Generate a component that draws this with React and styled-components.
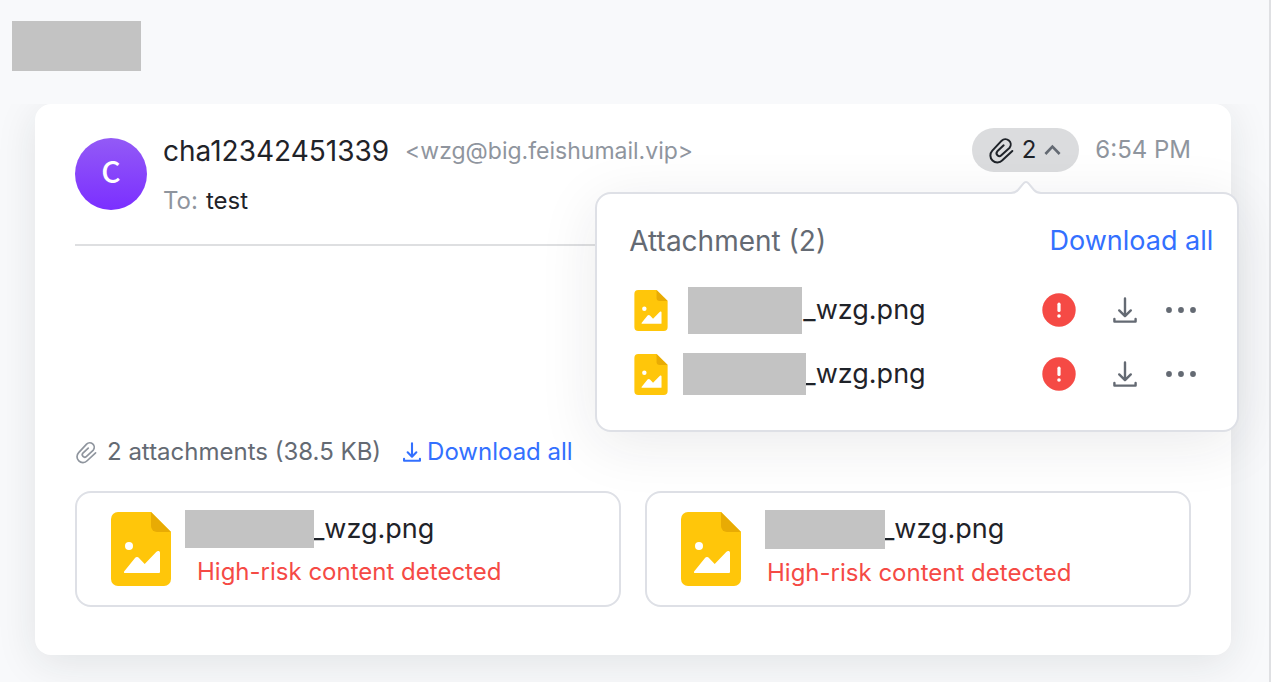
import React, { useState } from 'react'
import styled, { createGlobalStyle } from 'styled-components'

const Global = createGlobalStyle`
  *, *::before, *::after {
    box-sizing: border-box;
  }
  body {
    margin: 0;
    background: #f8f9fb;
    color: #1f2329;
    font-family: Inter, "Liberation Sans", sans-serif;
    font-size: 24px;
    line-height: 32px;
  }
  button {
    padding: 0;
    border: none;
    background: transparent;
    color: inherit;
    font: inherit;
    cursor: pointer;
  }
  svg {
    display: block;
    flex: none;
  }
`

const Page = styled.div`
  min-height: 100vh;
  display: flex;
  flex-direction: column;
  border-right: 2px solid #dfe0e3;
`

const TopBar = styled.header`
  padding: 21px 12px 33px;
`

const Mask = styled.span`
  position: relative;
  z-index: 1;
  display: block;
  flex: none;
  width: ${({ $width }) => $width}px;
  height: ${({ $height }) => $height}px;
  margin-left: ${({ $before }) => $before || 0}px;
  margin-right: ${({ $after }) => $after || 0}px;
  background: #c3c3c3;
`

const Thread = styled.main`
  flex: 1;
  padding: 0 38px 27px 35px;
  overflow: hidden;
`

const Mail = styled.article`
  padding: 0 40px 48px;
  border-radius: 16px;
  background: #fff;
  box-shadow: 0 8px 40px rgba(31, 35, 41, 0.1);
`

const MailHeader = styled.div`
  display: flex;
  align-items: flex-start;
  padding: 24px 0 27px;
  border-bottom: 2px solid #dedfe1;
`

const Avatar = styled.div`
  display: flex;
  align-items: center;
  justify-content: center;
  width: 72px;
  height: 72px;
  margin: 10px 16px 0 0;
  padding-bottom: 8px;
  border-radius: 50%;
  background: linear-gradient(#935af6, #7b2fff);
  color: #fff;
  font-family: "Noto Sans CJK SC", sans-serif;
  font-size: 30px;
  font-weight: 500;
`

const Sender = styled.div`
  flex: 1;
  display: flex;
  flex-direction: column;
  gap: 12px;
  padding-top: 1px;
`

const Line = styled.div`
  display: flex;
  align-items: center;
  gap: ${({ $gap }) => $gap}px;
  min-height: ${({ $height }) => $height}px;
`

const Name = styled.span`
  font-size: 28px;
`

const Muted = styled.span`
  color: #8f959e;
`

const Address = styled(Muted)`
  font-size: 23px;
`

const HeaderSide = styled.div`
  display: flex;
  align-items: center;
  gap: 16px;
  color: #8f959e;
`

const PopoverAnchor = styled.div`
  position: relative;
`

const Pill = styled.button`
  display: flex;
  align-items: center;
  gap: 8px;
  height: 44px;
  padding: 0 17px 0 16px;
  border-radius: 22px;
  background: #dbdcde;
  color: #1f2329;
`

const Popover = styled.section`
  position: absolute;
  top: 64px;
  right: -160px;
  z-index: 5;
  width: 644px;
  padding: 22px 24px 24px 32px;
  border: 2px solid #dee0e6;
  border-radius: 16px;
  background: #fff;
  box-shadow: 0 12px 60px rgba(31, 35, 41, 0.09);
`

const Arrow = styled.svg`
  position: absolute;
  top: 52px;
  left: 50%;
  z-index: 6;
  transform: translateX(-50%);
`

const PopoverHead = styled.div`
  display: flex;
  align-items: center;
  justify-content: space-between;
  height: 50px;
  margin-bottom: 12px;
  color: #646a73;
  font-size: 27px;
`

const PopoverTitle = styled.span`
  font-size: 28px;
`

const LinkButton = styled.button`
  display: inline-flex;
  align-items: center;
  gap: 6px;
  color: #3370ff;
`

const FileList = styled.ul`
  margin: 0;
  padding: 0;
  list-style: none;
`

const FileRow = styled.li`
  display: flex;
  align-items: center;
  height: 64px;
  padding: 0 14px 0 5px;
`

const FileName = styled.div`
  flex: 1;
  display: flex;
  align-items: center;
  color: #1f2329;
  font-size: 27px;
`

const Actions = styled.div`
  display: flex;
  align-items: center;
  gap: 20px;
  color: #646a73;
`

const Warning = styled.span`
  margin-right: 11px;
`

const IconButton = styled.button`
  display: flex;
  align-items: center;
  justify-content: center;
  width: 36px;
  height: 36px;
`

const MailBody = styled.div`
  height: 190px;
`

const Summary = styled.div`
  display: flex;
  align-items: center;
  gap: 10px;
  margin-bottom: 23px;
  color: #646a73;

  ${LinkButton} {
    margin-left: 12px;
  }
`

const Cards = styled.div`
  display: grid;
  grid-template-columns: 1fr 1fr;
  gap: 24px;
`

const Card = styled.div`
  display: flex;
  align-items: center;
  gap: 26px;
  height: 116px;
  padding: 0 34px;
  border: 2px solid #dee0e6;
  border-radius: 16px;
`

const CardText = styled.div`
  display: flex;
  flex-direction: column;
  gap: 8px;

  ${FileName} {
    height: 38px;
  }
`

const Risk = styled.span`
  color: #f54a45;
`

const ClipIcon = ({ width, height, color }) => (
  <svg width={width} height={height} viewBox="0 0 78 84" fill="none" stroke={color} strokeWidth="6" strokeLinecap="round" strokeLinejoin="round">
    <path d="M73 45L43 73a20.500 20.500 0 0 1-30-29L41 14a16 16 0 0 1 24 21L40 58a8.500 8.500 0 0 1-12-12l19-18" />
  </svg>
)

const DownloadIcon = ({ width, height, weight = 2.4 }) => (
  <svg width={width} height={height} viewBox="0 0 24 26" fill="none" stroke="currentColor" strokeWidth={weight} strokeLinecap="round" strokeLinejoin="round">
    <path d="M12 1.400V19M6.200 13.400L12 19.200l5.800-5.800" />
    <path d="M1.400 22v2.600h21.200V22" />
  </svg>
)

const MoreIcon = () => (
  <svg width="30" height="6" viewBox="0 0 30 6" fill="currentColor">
    <circle cx="3" cy="3" r="2.9" />
    <circle cx="15" cy="3" r="2.9" />
    <circle cx="27" cy="3" r="2.9" />
  </svg>
)

const WarningIcon = () => (
  <svg width="34" height="34" viewBox="0 0 34 34" role="img" aria-label="Risk">
    <circle cx="17" cy="17" r="16.7" fill="#f54a45" />
    <path d="M17 11.200v6.200" stroke="#fff" strokeWidth="3.2" strokeLinecap="round" />
    <circle cx="17" cy="23" r="1.8" fill="#fff" />
  </svg>
)

const ChevronIcon = () => (
  <svg width="18" height="12" viewBox="0 0 18 12" fill="none" stroke="#646a73" strokeWidth="2.6">
    <path d="M1.400 10L8.400 2.600l7.200 7.400" />
  </svg>
)

const ImageFileIcon = ({ width, height }) => (
  <svg width={width} height={height} viewBox="0 0 60 74">
    <path d="M7 0h33l20 20v47a7 7 0 0 1-7 7H7a7 7 0 0 1-7-7V7a7 7 0 0 1 7-7z" fill="#ffc60a" />
    <path d="M40 0l20 20H46a6 6 0 0 1-6-6z" fill="#e8ab04" />
    <circle cx="18" cy="34" r="4" fill="#fff" />
    <path d="M14 61c-1 0-1.400-1-.7-1.800L23.800 46.200c1.200-1.500 3.200-1.500 4.400 0L33.700 52l11.500-12c1.300-1.600 3.800-1.500 3.800.8V60a1 1 0 0 1-1 1z" fill="#fff" />
  </svg>
)

const files = [
  {
    id: 1,
    row: { $width: 114, $height: 47, $before: 20, $after: 1 },
    card: { $width: 129, $height: 38, $before: -12, $after: -2 },
  },
  {
    id: 2,
    row: { $width: 123, $height: 42, $before: 15, $after: -3 },
    card: { $width: 120, $height: 39, $before: -2, $after: -3 },
  },
]

const App = () => {
  const [open, setOpen] = useState(true)

  return (
    <Page>
      <Global />
      <TopBar>
        <Mask $width={129} $height={50} />
      </TopBar>
      <Thread>
        <Mail>
          <MailHeader>
            <Avatar>C</Avatar>
            <Sender>
              <Line $gap={16} $height={44}>
                <Name>cha12342451339</Name>
                <Address>&lt;wzg@big.feishumail.vip&gt;</Address>
              </Line>
              <Line $gap={8} $height={32}>
                <Muted>To:</Muted>
                <span>test</span>
              </Line>
            </Sender>
            <HeaderSide>
              <PopoverAnchor>
                <Pill aria-expanded={open} onClick={() => setOpen(!open)}>
                  <ClipIcon width={26} height={28} color="#1f2329" />
                  2
                  <ChevronIcon />
                </Pill>
                {open && (
                  <>
                    <Popover>
                      <PopoverHead>
                        <PopoverTitle>Attachment (2)</PopoverTitle>
                        <LinkButton>Download all</LinkButton>
                      </PopoverHead>
                      <FileList>
                        {files.map(file => (
                          <FileRow key={file.id}>
                            <ImageFileIcon width={34} height={41} />
                            <FileName>
                              <Mask {...file.row} />
                              _wzg.png
                            </FileName>
                            <Actions>
                              <Warning><WarningIcon /></Warning>
                              <IconButton aria-label="Download"><DownloadIcon width={24} height={26} /></IconButton>
                              <IconButton aria-label="More"><MoreIcon /></IconButton>
                            </Actions>
                          </FileRow>
                        ))}
                      </FileList>
                    </Popover>
                    <Arrow width="32" height="14" viewBox="0 0 32 14">
                      <path d="M1 13c3.500 0 5-.8 7-3l5.500-6.600c1.500-2 3.500-2 5 0L24 10c2 2.200 3.500 3 7 3v1H1z" fill="#fff" />
                      <path d="M1 13c3.500 0 5-.8 7-3l5.500-6.600c1.500-2 3.500-2 5 0L24 10c2 2.200 3.500 3 7 3" fill="none" stroke="#dee0e6" strokeWidth="2" />
                    </Arrow>
                  </>
                )}
              </PopoverAnchor>
              <time>6:54 PM</time>
            </HeaderSide>
          </MailHeader>
          <MailBody />
          <Summary>
            <ClipIcon width={22} height={24} color="#8f959e" />
            <span>2 attachments (38.5 KB)</span>
            <LinkButton>
              <DownloadIcon width={18} height={20} weight={2.8} />
              Download all
            </LinkButton>
          </Summary>
          <Cards>
            {files.map(file => (
              <Card key={file.id}>
                <ImageFileIcon width={60} height={74} />
                <CardText>
                  <FileName>
                    <Mask {...file.card} />
                    _wzg.png
                  </FileName>
                  <Risk>High-risk content detected</Risk>
                </CardText>
              </Card>
            ))}
          </Cards>
        </Mail>
      </Thread>
    </Page>
  )
}

export default App
